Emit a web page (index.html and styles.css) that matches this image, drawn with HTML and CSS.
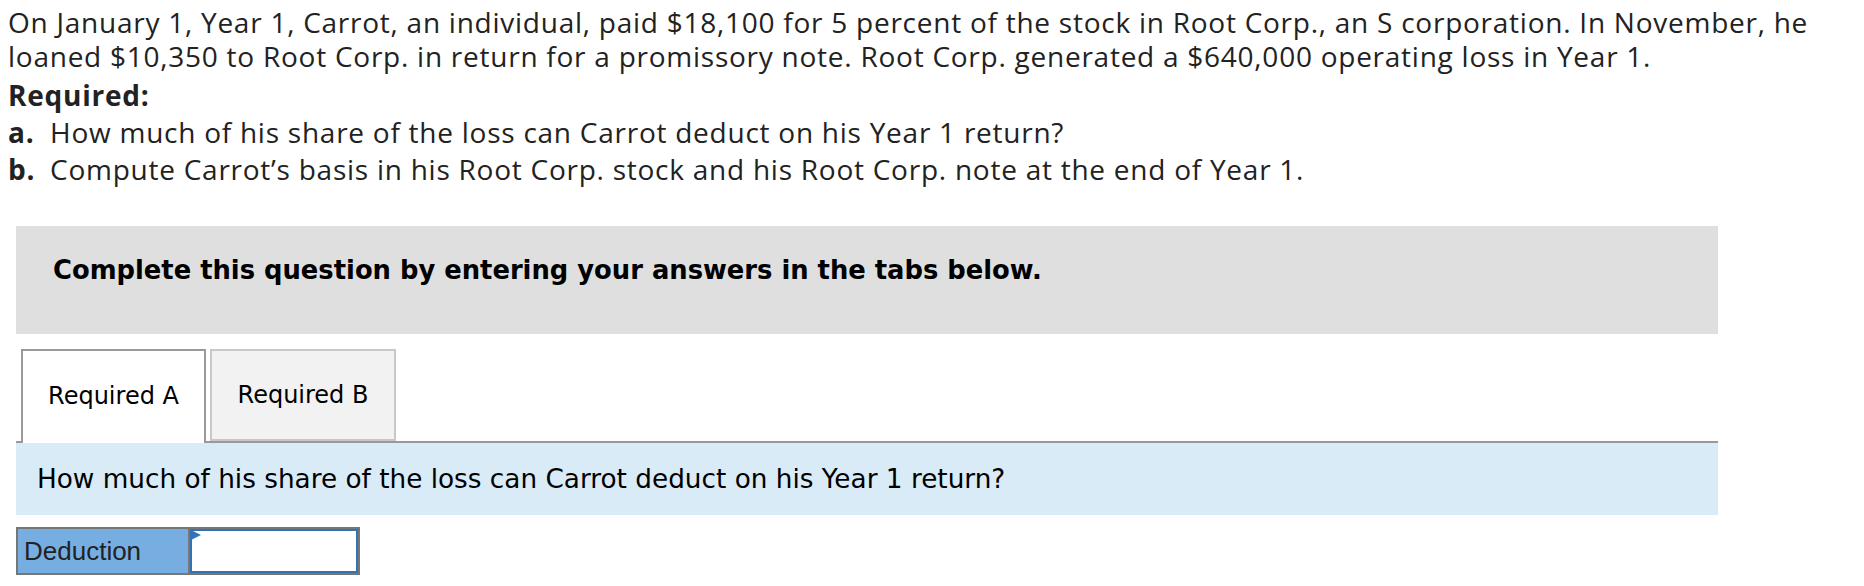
FILE: index.html
```html
<!DOCTYPE html>
<html lang="en">
<head>
<meta charset="utf-8">
<title>Root Corp. question</title>
<link rel="stylesheet" href="styles.css">
</head>
<body>
<div class="question">
  <p class="intro">On January 1, Year 1, Carrot, an individual, paid $18,100 for 5 percent of the stock in Root Corp., an S corporation. In November, he<br>loaned $10,350 to Root Corp. in return for a promissory note. Root Corp. generated a $640,000 operating loss in Year 1.</p>
  <p class="req-title">Required:</p>
  <ol class="req-list">
    <li><b class="marker">a.</b><span>How much of his share of the loss can Carrot deduct on his Year 1 return?</span></li>
    <li><b class="marker">b.</b><span>Compute Carrot’s basis in his Root Corp. stock and his Root Corp. note at the end of Year 1.</span></li>
  </ol>
</div>
<div class="assignment">
  <div class="instructions">Complete this question by entering your answers in the tabs below.</div>
  <div class="tabs">
    <div class="tab active">Required A</div>
    <div class="tab">Required B</div>
  </div>
  <div class="prompt">How much of his share of the loss can Carrot deduct on his Year 1 return?</div>
  <div class="answer-row">
    <div class="answer-label">Deduction</div>
    <div class="answer-cell"><span class="flag"></span><input class="answer-input" type="text" aria-label="Deduction"></div>
  </div>
</div>
</body>
</html>
```
FILE: styles.css
```css
html, body {
  margin: 0;
  padding: 0;
  background: #fff;
}
body {
  padding: 5px 0 0 8px;
}
.question {
  font-family: "Open Sans", Lato, sans-serif;
  font-size: 28px;
  letter-spacing: 0.75px;
  font-variant-ligatures: none;
  color: #222;
}
.intro {
  margin: 0;
  line-height: 34px;
}
.req-title {
  margin: 4px 0 0;
  font-weight: bold;
  line-height: 37px;
}
.req-list {
  list-style: none;
  margin: 0;
  padding: 0;
}
.req-list li {
  display: flex;
  line-height: 37px;
}
.marker {
  width: 42px;
  flex: none;
}
.assignment {
  margin: 38px 0 0 8px;
  width: 1702px;
  font-family: Verdana, "DejaVu Sans", sans-serif;
}
.instructions {
  background: #dfdfdf;
  height: 108px;
  box-sizing: border-box;
  padding: 29px 0 0 37px;
  font-size: 25.8px;
  font-weight: bold;
  color: #000;
  line-height: 30px;
}
.tabs {
  display: flex;
  align-items: flex-end;
  gap: 4px;
  margin-top: 15px;
  padding-left: 5px;
  border-bottom: 2px solid #999;
}
.tab {
  width: 186px;
  height: 92px;
  box-sizing: border-box;
  border: 2px solid #c8c8c8;
  background: #f2f2f2;
  display: flex;
  align-items: center;
  justify-content: center;
  font-size: 24px;
  color: #000;
}
.tab.active {
  width: 185px;
  height: 94px;
  margin-bottom: -2px;
  border-color: #999;
  border-bottom: none;
  background: #fff;
  padding-bottom: 2px;
}
.prompt {
  background: #d9ebf7;
  height: 72px;
  box-sizing: border-box;
  padding-left: 21px;
  display: flex;
  align-items: center;
  font-size: 26.3px;
  color: #000;
}
.answer-row {
  display: flex;
  width: 344px;
  height: 48px;
  box-sizing: border-box;
  margin-top: 12px;
  border: 2px solid #767676;
  font-family: "Liberation Sans", Arial, sans-serif;
}
.answer-label {
  width: 172px;
  flex: none;
  background: #77aee2;
  border-right: 2px solid #767676;
  box-sizing: border-box;
  display: flex;
  align-items: center;
  padding-left: 6px;
  font-size: 26px;
  color: #222;
}
.answer-cell {
  position: relative;
  flex: 1;
  min-width: 0;
  display: flex;
}
.answer-input {
  width: 100%;
  min-width: 0;
  box-sizing: border-box;
  margin: 0;
  border: 2px solid #3373b5;
  background: #fff;
  padding: 0 6px;
  font: inherit;
  outline: none;
}
.flag {
  position: absolute;
  left: 1px;
  top: 1px;
  width: 0;
  height: 0;
  border-top: 5px solid transparent;
  border-bottom: 5px solid transparent;
  border-left: 10px solid #3373b5;
}
```
